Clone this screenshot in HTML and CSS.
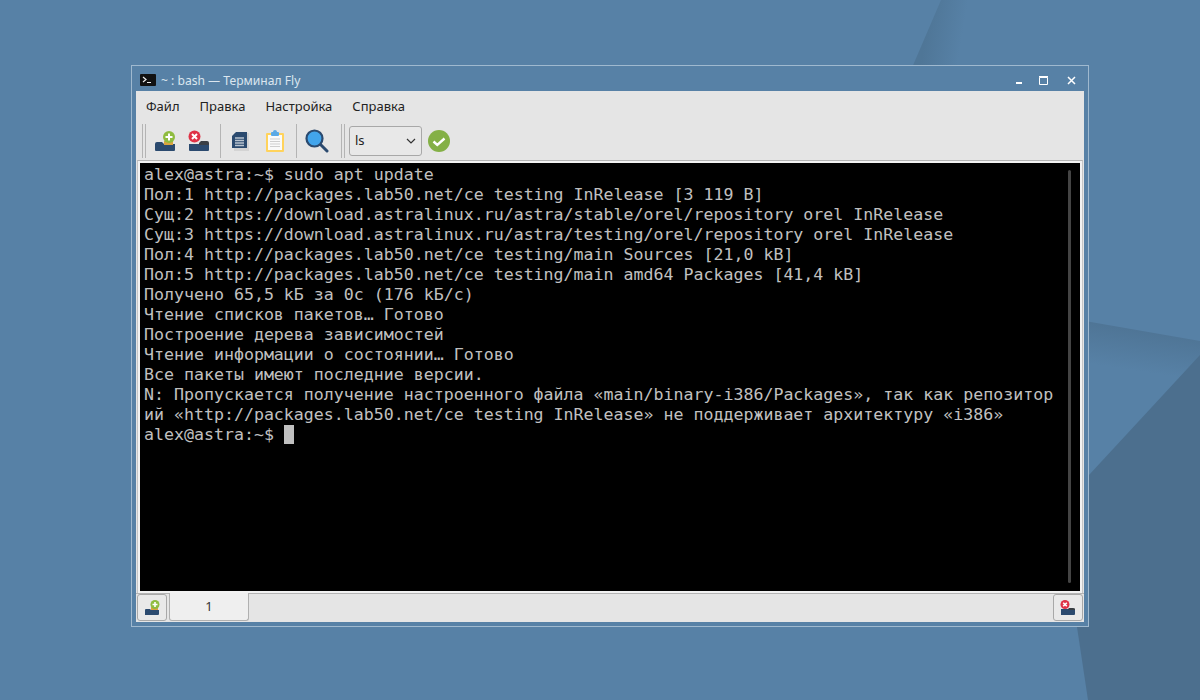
FILE: index.html
```html
<!DOCTYPE html>
<html lang="ru">
<head>
<meta charset="utf-8">
<title>Терминал Fly</title>
<link rel="stylesheet" href="styles.css">
</head>
<body>
<svg class="wallpaper" width="1200" height="700" viewBox="0 0 1200 700">
<defs>
<linearGradient id="band" gradientUnits="userSpaceOnUse" x1="926" y1="32" x2="962" y2="38"><stop offset="0" stop-color="#4f7697"/><stop offset="1" stop-color="#5781a6"/></linearGradient>
<linearGradient id="band2" gradientUnits="userSpaceOnUse" x1="1150" y1="332" x2="1144" y2="372"><stop offset="0" stop-color="#4f7596"/><stop offset="1" stop-color="#5781a6"/></linearGradient>
</defs>
<rect width="1200" height="700" fill="#5781a6"/>
<polygon points="941,0 970,0 962,70 911,70" fill="url(#band)"/>
<polygon points="1085,321 1200,341 1200,400 1085,380" fill="url(#band2)"/>
<polygon points="1200,355 1089,475 1077,627 1088,700 1200,700" fill="#4c6f8e"/>
</svg>
<main class="window">
<header class="titlebar">
<svg class="appicon" width="16" height="12" viewBox="0 0 16 12"><rect width="16" height="12" rx="1" fill="#111"/><path d="M3 3l3 2.500-3 2.500" fill="none" stroke="#eee" stroke-width="1.200"/><path d="M7 8.500h4" stroke="#eee"/></svg>
<span class="title">~ : bash — Терминал Fly</span>
<div class="winbtns">
<svg class="btn-min" width="6" height="2" viewBox="0 0 6 2"><rect width="6" height="2" fill="#fff"/></svg>
<svg width="9" height="9" viewBox="0 0 9 9"><path d="M.5 1.500h8v7h-8z" fill="none" stroke="#fff"/><path d="M0 .7h9" stroke="#fff" stroke-width="1.400"/></svg>
<svg class="btn-close" width="9" height="9" viewBox="0 0 9 9"><path d="M1 1l7 7M8 1l-7 7" stroke="#fff" stroke-width="1.500"/></svg>
</div>
</header>
<div class="body">
<nav class="menubar"><span>Файл</span><span>Правка</span><span>Настройка</span><span>Справка</span></nav>
<div class="toolbar">
<i class="grip"></i>
<svg class="tool first" width="22" height="22" viewBox="0 0 22 22"><path d="M1 20v-6q0-2 2-2h5l2 2h11v6q0 1-1 1H2q-1 0-1-1z" fill="#2b4a6f"/><rect x="10" y="11" width="9" height="4" fill="#d9a441"/><circle cx="15" cy="7" r="6" fill="#8fbc3f"/><path d="M15 3.500v7M11.500 7h7" stroke="#fff" stroke-width="2"/></svg>
<svg class="tool" width="22" height="22" viewBox="0 0 22 22"><path d="M1 14h20v6q0 1-1 1H2q-1 0-1-1z" fill="#2b4a6f"/><path d="M11 13l2-2h6q2 0 2 2v2H11z" fill="#3a3f45"/><circle cx="6.500" cy="6.500" r="6" fill="#df3246"/><path d="M4 4l5 5M9 4l-5 5" stroke="#fff" stroke-width="2"/></svg>
<i class="sep sep-a"></i>
<svg class="tool" width="18" height="20" viewBox="0 0 18 20"><rect x="3" y="2" width="15" height="18" fill="#d4d4d4"/><path d="M5 1h11v16H1V5z" fill="#2b4a6f"/><path d="M4 7h9M4 9.500h9M4 12h9M4 14.500h9" stroke="#b9c4cf" stroke-width="1.300"/></svg>
<svg class="tool clip" width="20" height="22" viewBox="0 0 20 22"><rect x="1" y="3" width="18" height="19" rx="1" fill="#ffd35c"/><rect x="3" y="5" width="14" height="15" fill="#fafafa"/><path d="M5 9h10M5 11.500h10M5 14h10M5 16.500h10" stroke="#cfcfcf"/><rect x="6" y="2" width="8" height="4" rx="1" fill="#5aa9e6"/><circle cx="10" cy="2" r="2" fill="#5aa9e6"/></svg>
<i class="sep sep-b"></i>
<svg class="tool" width="24" height="24" viewBox="0 0 24 24"><path d="M14 14l8 8" stroke="#2b4a6f" stroke-width="3" stroke-linecap="round"/><circle cx="9.500" cy="9.500" r="8" fill="#42a5ec" stroke="#2b4a6f" stroke-width="2.200"/></svg>
<i class="grip grip-b"></i>
<div class="combo"><span class="combo-text">ls</span><svg width="10" height="6" viewBox="0 0 10 6"><path d="M1 1l4 4 4-4" fill="none" stroke="#333" stroke-width="1.200"/></svg></div>
<svg class="ok" width="22" height="22" viewBox="0 0 22 22"><circle cx="11" cy="11" r="11" fill="#84b046"/><path d="M5.500 11.500l3.800 3.500 7.200-6.500" fill="none" stroke="#fff" stroke-width="2.400"/></svg>
</div>
<section class="termframe">
<div class="terminal">
<pre class="screen">alex@astra:~$ sudo apt update
Пол:1 http://packages.lab50.net/ce testing InRelease [3 119 B]
Сущ:2 https://download.astralinux.ru/astra/stable/orel/repository orel InRelease
Сущ:3 https://download.astralinux.ru/astra/testing/orel/repository orel InRelease
Пол:4 http://packages.lab50.net/ce testing/main Sources [21,0 kB]
Пол:5 http://packages.lab50.net/ce testing/main amd64 Packages [41,4 kB]
Получено 65,5 kБ за 0с (176 kБ/c)
Чтение списков пакетов… Готово
Построение дерева зависимостей
Чтение информации о состоянии… Готово
Все пакеты имеют последние версии.
N: Пропускается получение настроенного файла «main/binary-i386/Packages», так как репозитор
ий «http://packages.lab50.net/ce testing InRelease» не поддерживает архитектуру «i386»
alex@astra:~$ <b class="cursor"></b></pre>
<i class="scroll"></i>
</div>
</section>
<footer class="tabbar">
<button class="cornerbtn"><svg width="16" height="15" viewBox="0 0 16 15"><path d="M1 15v-5q0-1 1-1h4l1 1h8v4q0 1-1 1z" fill="#2b4a6f"/><rect x="7" y="7" width="7" height="3" fill="#d9a441"/><circle cx="11" cy="4.500" r="4.500" fill="#8fbc3f"/><path d="M11 2v5M8.500 4.500h5" stroke="#fff" stroke-width="1.600"/></svg></button>
<div class="tab">1</div>
<div class="tabfill"></div>
<button class="cornerbtn"><svg width="16" height="15" viewBox="0 0 16 15"><path d="M1 9h14v5q0 1-1 1H1z" fill="#2b4a6f"/><path d="M8 9l1-1h4q2 0 2 1v1H8z" fill="#3a3f45"/><circle cx="5" cy="4.500" r="4.500" fill="#df3246"/><path d="M3.200 2.700l3.600 3.600M6.800 2.700l-3.600 3.600" stroke="#fff" stroke-width="1.600"/></svg></button>
</footer>
</div>
</main>
</body>
</html>
```

FILE: styles.css
```css
* { box-sizing: border-box; }
html, body { margin: 0; width: 1200px; height: 700px; overflow: hidden; }
body { background: #5781a6; padding: 65px 111px 73px 131px; font-family: "Noto Sans", sans-serif; position: relative; }
.wallpaper { position: absolute; left: 0; top: 0; }
.window { position: relative; width: 958px; height: 562px; border: 1px solid #9fb9cf; display: flex; flex-direction: column; padding: 0 4px 4px 4px; background: #5781a6; }
.titlebar { height: 25px; display: flex; align-items: center; padding: 3px 0 0 4px; color: #dbe6ef; font-size: 12.1px; flex: none; }
.appicon { flex: none; }
.title { margin-left: 5px; }
.winbtns { margin-left: auto; display: flex; align-items: center; gap: 17px; padding-right: 8px; }
.winbtns svg { display: block; }
.btn-min { margin-top: 6px; }
.btn-close { margin-left: 2px; }
.body { flex: 1; background: #e5e5e5; display: flex; flex-direction: column; min-height: 0; }
.menubar { height: 30px; display: flex; align-items: center; gap: 20px; padding-left: 10px; font-size: 13px; color: #222; flex: none; }
.toolbar { height: 39px; display: flex; align-items: center; padding-left: 6px; flex: none; }
.grip { width: 4px; height: 34px; border-left: 1px solid #b4b4b4; border-right: 1px solid #b4b4b4; flex: none; }
.grip-b { margin-left: 12px; }
.tool { flex: none; margin-left: 12px; display: block; }
.tool.first { margin-left: 8px; }
.tool.clip { margin-left: 16px; }
.sep { width: 1px; height: 34px; background: #b4b4b4; flex: none; margin-left: 10px; }
.sep-a + .tool { margin-left: 10px; }
.sep-b + .tool { margin-left: 8px; }
.sep-b { margin-left: 11px; }
.combo { width: 73px; height: 30px; margin-left: 4px; border: 1px solid #a8a8a8; border-radius: 3px; background: #e8e8e8; display: flex; align-items: center; justify-content: space-between; padding: 0 5px; font-size: 13px; color: #222; flex: none; }
.combo-text { margin-top: -2px; }
.ok { margin-left: 6px; flex: none; }
.termframe { flex: 1; min-height: 0; margin: 0 1px; padding: 2px; border-top: 1px solid #b4b4b4; border-left: 1px solid #c6c6c6; border-right: 1px solid #c6c6c6; background: #f2f2f2; }
.terminal { height: 100%; background: #000; position: relative; overflow: hidden; }
.screen { margin: 0; padding: 2px 0 0 4px; font-family: "DejaVu Sans Mono", monospace; font-size: 16.6px; line-height: 20px; color: #c0c0c0; white-space: pre; }
.cursor { display: inline-block; width: 10px; height: 19px; background: #c0c0c0; vertical-align: -4px; }
.scroll { position: absolute; right: 9px; top: 7px; bottom: 8px; width: 3px; background: #444; border-radius: 2px; }
.tabbar { height: 29px; flex: none; display: flex; align-items: flex-start; background: #e5e5e5; padding: 0 1px; border-top: 1px solid #b4b4b4; }
.cornerbtn { width: 30px; height: 27px; margin: 0; padding: 0; border: 1px solid #a8a8a8; border-radius: 3px; background: #e9e9e9; display: flex; align-items: center; justify-content: center; flex: none; }
.tab { width: 80px; height: 28px; margin: -1px 0 0 2px; background: #efefef; border: 1px solid #b0b0b0; border-top: 0; border-radius: 0 0 3px 3px; text-align: center; font-size: 13px; line-height: 27px; color: #333; flex: none; }
.tabfill { flex: 1; }
```
